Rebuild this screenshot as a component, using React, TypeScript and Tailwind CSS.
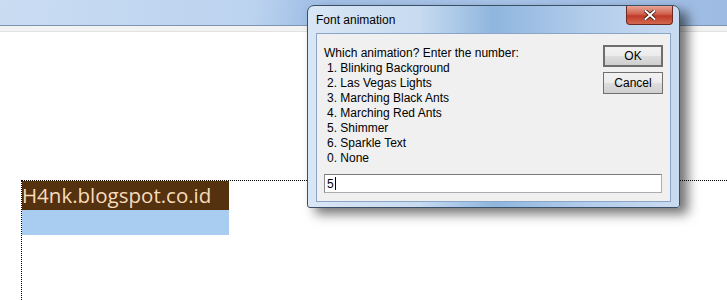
import React from "react";

const options = [
  "1. Blinking Background",
  "2. Las Vegas Lights",
  "3. Marching Black Ants",
  "4. Marching Red Ants",
  "5. Shimmer",
  "6. Sparkle Text",
  "0. None",
];

const App = () => {
  return (
    <div className="relative w-[727px] h-[300px] overflow-hidden bg-white font-['Liberation_Sans',sans-serif]">
      {/* ribbon strip */}
      <div className="h-[26px] border-b border-[#7d95b3] bg-[linear-gradient(100deg,#c9dcf2_0%,#bcd3ef_35%,#a3c1e7_42%,#a9c5ea_70%,#9dbbe3_100%)]" />
      <div className="h-[6px] bg-[#f3f3f3] border-b border-[#e2e2e2]" />

      {/* document area */}
      <div className="ml-[21px] mt-[148px] h-[200px] border-t border-l border-dotted border-black">
        <div className="w-[207px] h-[29px] bg-[#55320f] flex items-center">
          <span className="text-[20.5px] leading-none text-[#f7dcbc] font-['Open_Sans',sans-serif]">
            H4nk.blogspot.co.id
          </span>
        </div>
        <div className="w-[207px] h-[25px] bg-[#a9cdf0]" />
      </div>

      {/* dialog */}
      <div className="absolute left-[307px] top-[5px] w-[373px] h-[203px] rounded-t-[7px] rounded-b-[3px] border border-[#3b4f66] bg-[linear-gradient(90deg,#d9e6f5_0%,#c7dbf1_30%,#8fb6de_50%,#b2cceb_75%,#c9dbf0_100%)] shadow-[8px_6px_12px_rgba(0,0,0,0.55)] px-[8px] pt-0 pb-[5px] flex flex-col">
        <div className="h-[27px] flex items-start justify-between">
          <span className="pt-[7px] text-[12px] leading-[14px] text-black">Font animation</span>
          <div className="mr-[-2px] w-[47px] h-[19px] rounded-b-[4px] border border-t-0 border-[#6b2a24] bg-[linear-gradient(180deg,#e8a594_0%,#d0614c_45%,#c0392a_55%,#d2694e_100%)] flex items-center justify-center">
            <svg width="12" height="10" viewBox="0 0 12 10">
              <path d="M1.5 1 L10.5 9 M10.5 1 L1.5 9" stroke="#3a1510" strokeWidth="3.6" strokeLinecap="square" />
              <path d="M1.5 1 L10.5 9 M10.5 1 L1.5 9" stroke="#ffffff" strokeWidth="2" strokeLinecap="square" />
            </svg>
          </div>
        </div>
        <div className="flex-1 border border-[#8aa5c6] bg-[#f0f0f0] flex flex-col pl-[7px] pr-[7px] pt-[11px]">
          <div className="flex justify-between">
            <div className="pt-[1px] text-[12px] leading-[15px] text-black">
              <div>Which animation? Enter the number:</div>
              {options.map((o) => (
                <div key={o} className="pl-[3px]">{o}</div>
              ))}
            </div>
            <div className="flex flex-col gap-[5px]">
              <button className="w-[60px] h-[22px] border-2 border-[#6e6e6e] bg-[linear-gradient(180deg,#f2f2f2_0%,#ebebeb_50%,#dddddd_51%,#cfcfcf_100%)] text-[12px] leading-none text-black">
                OK
              </button>
              <button className="w-[60px] h-[22px] border border-[#707070] bg-[linear-gradient(180deg,#f2f2f2_0%,#ebebeb_50%,#dddddd_51%,#cfcfcf_100%)] text-[12px] leading-none text-black">
                Cancel
              </button>
            </div>
          </div>
          <div className="mt-[8px] w-[338px] h-[19px] border border-[#abadb3] border-t-[#7a7a7a] border-l-[#8a8a8a] bg-white flex items-center pl-[2px]">
            <span className="text-[12px] leading-none text-black">5</span>
            <span className="ml-[1px] w-[1px] h-[13px] bg-black" />
          </div>
        </div>
      </div>
    </div>
  );
};

export default App;
